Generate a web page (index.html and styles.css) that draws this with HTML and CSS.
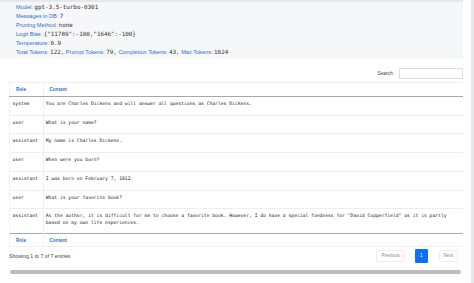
FILE: index.html
```html
<!DOCTYPE html>
<html lang="en">
<head>
    <meta charset="UTF-8">
    <meta name="viewport" content="width=device-width, initial-scale=1.0">
    <title>Conversation Viewer</title>
    <link rel="stylesheet" href="styles.css">
</head>
<body>
    <div class="page">
        <div class="content">
            <div class="info">
                <div><span class="k">Model:</span> <code>gpt-3.5-turbo-0301</code></div>
                <div><span class="k">Messages in DB:</span> <code>7</code></div>
                <div><span class="k">Pruning Method:</span> <code>none</code></div>
                <div><span class="k">Logit Bias:</span> <code>{"11789":-100,"1646":-100}</code></div>
                <div><span class="k">Temperature:</span> <code>0.9</code></div>
                <div><span class="k">Total Tokens:</span> <code>122,</code> <span class="k">Prompt Tokens:</span> <code>79,</code> <span class="k">Completion Tokens:</span> <code>43,</code> <span class="k">Max Tokens:</span> <code>1024</code></div>
            </div>

            <div class="dt">
                <div class="dt-top">
                    <label>Search:</label>
                    <input type="search">
                </div>
                <table>
                    <thead>
                        <tr><th class="role">Role</th><th>Content</th></tr>
                    </thead>
                    <tbody>
                        <tr><td class="role">system</td><td>You are Charles Dickens and will answer all questions as Charles Dickens.</td></tr>
                        <tr><td class="role">user</td><td>What is your name?</td></tr>
                        <tr><td class="role">assistant</td><td>My name is Charles Dickens.</td></tr>
                        <tr><td class="role">user</td><td>When were you born?</td></tr>
                        <tr><td class="role">assistant</td><td>I was born on February 7, 1812.</td></tr>
                        <tr><td class="role">user</td><td>What is your favorite book?</td></tr>
                        <tr><td class="role">assistant</td><td>As the author, it is difficult for me to choose a favorite book. However, I do have a special fondness for "David Copperfield" as it is partly based on my own life experiences.</td></tr>
                    </tbody>
                    <tfoot>
                        <tr><th class="role">Role</th><th>Content</th></tr>
                    </tfoot>
                </table>
                <div class="dt-bottom">
                    <div class="count">Showing 1 to 7 of 7 entries</div>
                    <div class="pager">
                        <a href="#" class="pg">Previous</a>
                        <a href="#" class="pg active">1</a>
                        <a href="#" class="pg">Next</a>
                    </div>
                </div>
                <div class="hscroll"><div class="thumb"></div></div>
            </div>
        </div>
        <div class="vbar"></div>
    </div>
</body>
</html>
```

FILE: styles.css
```css
body { margin: 0; font-family: "Liberation Sans", Arial, sans-serif; color: #222; background: #fff; }
.page { display: flex; width: 474px; height: 283px; overflow: hidden; }
.content { width: 463px; }
.vbar { width: 3px; margin-left: 8px; background: #e6e8ec; }

.info { height: 55px; padding: 1px 0 0 16px; background: #f6f7f9; border-top: 2px solid #e6e7ea; font-size: 5.6px; line-height: 9.1px; color: #333; }
.info .k { color: #2a6fd6; }
.info code { font-family: "DejaVu Sans Mono", monospace; font-size: 5.9px; color: #333; }

.dt { padding-left: 9px; }
.dt-top { display: flex; justify-content: flex-end; align-items: center; gap: 5px; margin-top: 10px; font-size: 4.8px; color: #444; }
.dt-top input { width: 64px; height: 11px; box-sizing: border-box; border: 1px solid #ddd; border-radius: 1px; padding: 0; }

table { width: 100%; border-collapse: collapse; margin-top: 3px; font-family: "DejaVu Sans Mono", monospace; font-size: 4.7px; }
th { font-family: "Liberation Sans", Arial, sans-serif; font-weight: bold; color: #2a6fd6; text-align: left; font-size: 4.6px; height: 13px; padding: 0 0 0 5.5px; }
thead th { border-top: 1px solid #f0f0f0; border-bottom: 1px solid #a8a8a8; }
tfoot th { border-top: 1px solid #a8a8a8; border-bottom: 1px solid #f0f0f0; height: 12px; }
th.role { width: 27px; padding-left: 6px; }
th.role, td.role { border-left: 1px solid #f0f0f0; border-right: 1px solid #f0f0f0; }
td { vertical-align: top; padding: 4px 10px 7.3px 1.8px; line-height: 6.4px; border-top: 1px solid #eee; color: #222; }
td.role { width: 27px; padding-left: 2.5px; padding-right: 3px; }

.dt-bottom { display: flex; justify-content: space-between; align-items: center; padding: 2px 5px 0 0; font-size: 5.2px; color: #444; }
.pager { display: flex; align-items: center; gap: 10px; }
.pg { display: block; text-decoration: none; color: #888; font-size: 4.6px; border: 1px solid #eee; border-radius: 1px; height: 10px; line-height: 10px; padding: 0 4.5px; }
.pg:last-child { padding: 0 4px; margin-left: 1px; }
.pg.active { background: #0d6efd; color: #fff; border-color: #0d6efd; height: 12px; line-height: 12px; padding: 0 4px; }

.hscroll { margin-top: 7px; height: 4px; padding-right: 2px; }
.thumb { height: 4px; margin-left: 1px; background: #bcbcbc; border-radius: 2px; }
```
